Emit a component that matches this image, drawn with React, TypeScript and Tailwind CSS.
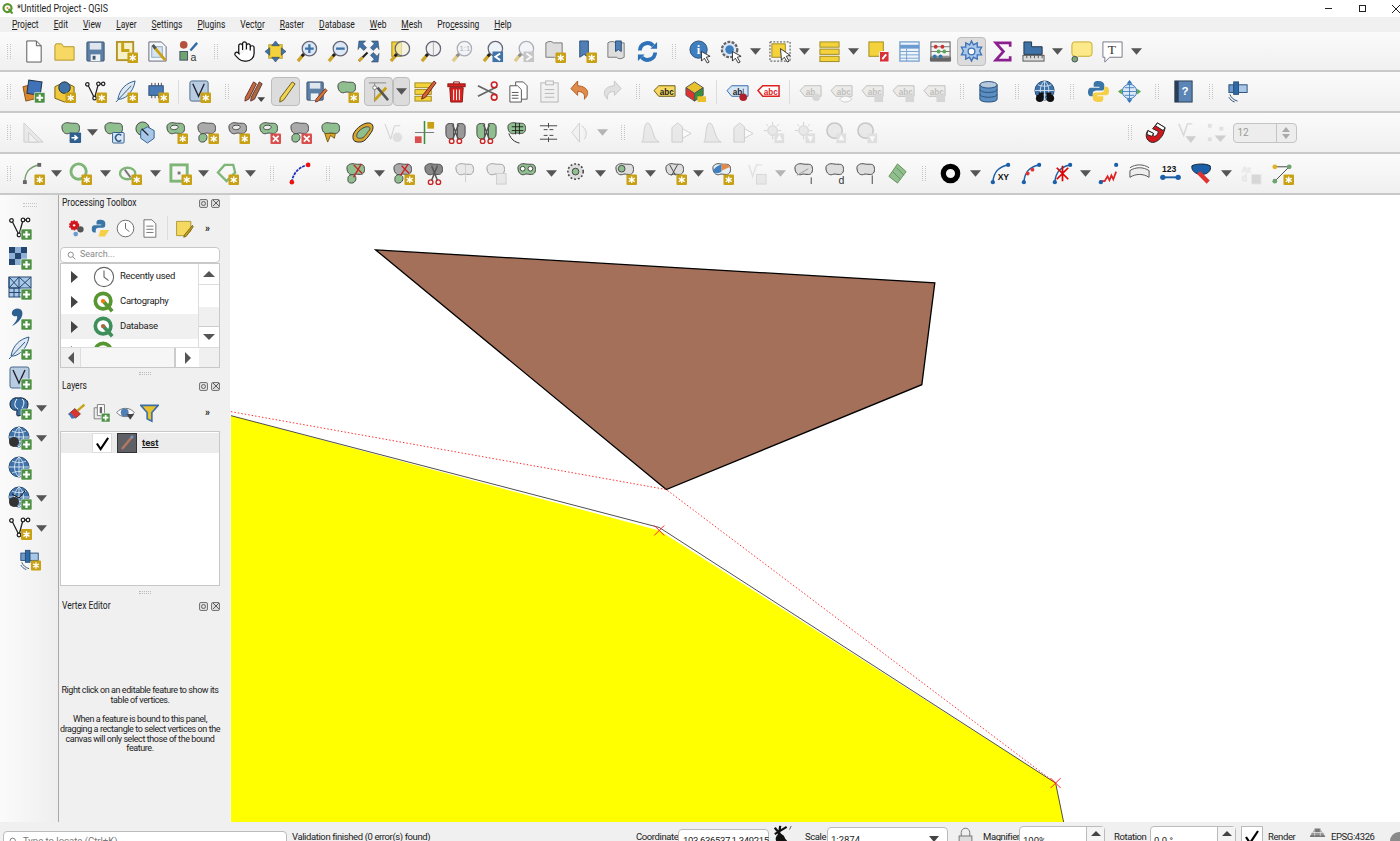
import type { ReactNode } from "react";

const star = (
  <g>
    <rect x="13" y="13" width="11" height="11" rx="1" fill="#c9a114" />
    <path d="M18.5 15v7M15.4 16.8l6.2 3.6M21.6 16.8l-6.2 3.6" stroke="#fff" strokeWidth="1.4" />
  </g>
);
const plus = (
  <g>
    <rect x="13" y="13" width="11" height="11" rx="1" fill="#4d9144" stroke="#fff" strokeWidth=".6" />
    <path d="M18.5 15v7M15 18.5h7" stroke="#fff" strokeWidth="2.2" />
  </g>
);
const redx = (
  <g>
    <rect x="13" y="13" width="11" height="11" rx="1" fill="#d8504d" />
    <path d="M15.5 15.5l6 6M21.5 15.5l-6 6" stroke="#fff" strokeWidth="1.8" />
  </g>
);
const blob = (fill = "#8fbf8f") => <path d="M2 6c0-3 4-5 8-4s9-1 10 3 0 8-4 8-5-1-7 0-7 0-7-7z" fill={fill} stroke="#444" />;
const lowBlob = (fill = "#8fbf8f") => <path d="M3 17c0-3 4-5 7-3s1 8-3 8-4-2-4-5z" fill={fill} stroke="#444" />;
const scissors = (
  <g fill="none" stroke="#c22">
    <circle cx="8" cy="20" r="2.4" strokeWidth="1.4" />
    <circle cx="16" cy="20" r="2.4" strokeWidth="1.4" />
    <path d="M9 18L15 3M15 18L9 3" stroke="#555" strokeWidth="1.6" />
  </g>
);
const mag = (inner?: ReactNode, fill = "#eef3fa") => (
  <g>
    <path d="M3 22l6-7" stroke="#caa52a" strokeWidth="3.4" />
    <path d="M7 17l3-3" stroke="#222" strokeWidth="3" />
    <circle cx="15" cy="9" r="7.5" fill={fill} stroke="#667" strokeWidth="1.3" />
    {inner}
  </g>
);
const vee = (
  <g fill="none" stroke="#222" strokeWidth="1.3">
    <path d="M4 5l7 14 4-15h4" />
    <circle cx="3.5" cy="4.5" r="1.8" fill="#fff" />
    <circle cx="11" cy="19" r="1.8" fill="#fff" />
    <circle cx="15" cy="4" r="1.8" fill="#fff" />
    <circle cx="20" cy="4" r="1.8" fill="#fff" />
  </g>
);
const feather = (
  <g>
    <path d="M21 1C12 3 5 9 3 20c6 1 16-6 18-19z" fill="#dfe8f2" stroke="#2f5f8f" />
    <path d="M1 23L17 6" stroke="#2f5f8f" />
  </g>
);
const vbox = (
  <g>
    <rect x="2" y="1" width="19" height="21" rx="2" fill="#b8cde2" stroke="#4a6a8a" />
    <path d="M5 4l6 13 6-13" fill="none" stroke="#223" strokeWidth="1.4" />
  </g>
);
const globe = (
  <g>
    <circle cx="11" cy="11" r="10" fill="#3f72a8" stroke="#2b4f78" />
    <path d="M1 11h20M11 1v20M4 5c4 2 10 2 14 0M4 17c4-2 10-2 14 0M11 1c-6 5-6 15 0 20M11 1c6 5 6 15 0 20" stroke="#dfeaf5" fill="none" strokeWidth=".9" />
  </g>
);
const chip = (
  <g>
    <rect x="3" y="6" width="15" height="10" fill="#4a7ab5" stroke="#2b4f78" />
    <path d="M6 3v3M9.5 3v3M13 3v3M16 3v3M6 16v3M9.5 16v3M13 16v3M16 16v3" stroke="#445" />
  </g>
);
const tag = (c: string, t: string, s = "#888") => (
  <g>
    <path d="M1 11l5-5h17v11H6z" fill={c} stroke={s} />
    <text x="7" y="15.5" fontSize="8.5" fontWeight="700" fill={s === "#888" ? "#888" : "#222"} fontFamily="Liberation Sans">{t}</text>
  </g>
);
const map = (c = "#ddd") => <path d="M3 3c3-2 6-2 8 0h9v15c-3 2-6 2-8 0H3z" fill={c} stroke="#777" />;
const wms = (
  <g fill="#6c9bd0" stroke="#2b4f78">
    <rect x="2" y="5" width="5" height="8" />
    <rect x="7" y="2" width="5" height="13" fill="#2f6aa8" />
    <rect x="12" y="5" width="9" height="8" fill="#a9c8e8" />
    <path d="M3 15c1 3 4 6 8 7M2 18c1 2 3 4 6 5" fill="none" />
  </g>
);
const sun = (
  <g stroke="#aaa" fill="#ddd">
    <circle cx="10" cy="10" r="5" />
    <path d="M10 1v3M10 16v3M1 10h3M16 10h3M3.5 3.5l2 2M16.5 3.5l-2 2" />
  </g>
);
const ball = <circle cx="10" cy="10" r="8" fill="#ddd" stroke="#999" strokeWidth="1.6" />;
const pencil = <path d="M19 2l3 2-12 17-4 2 .5-4.5z" fill="#f2d34f" stroke="#665a1e" />;
const curve = (c = "#1a5fa8") => <path d="M4 21C5 10 10 5 20 3" fill="none" stroke={c} strokeWidth="1.6" />;
const dotEnds = (c = "#1a5fa8") => (
  <g fill={c}>
    <circle cx="4" cy="21" r="2.2" />
    <circle cx="20" cy="3" r="2.2" />
  </g>
);

const ic: Record<string, ReactNode> = {
  new: <path d="M5 1h10l5 5v17H5zM15 1v5h5" fill="#fff" stroke="#555" />,
  open: <path d="M2 6l1-2h6l2 3h11v14H2z" fill="#f6d862" stroke="#b2962b" />,
  save: (
    <g>
      <rect x="3" y="2" width="18" height="20" rx="1" fill="#5d7fa5" stroke="#3d5670" />
      <rect x="6" y="3" width="12" height="7" fill="#dfe5ec" />
      <rect x="7" y="15" width="10" height="7" fill="#eef1f4" />
      <rect x="9" y="16.5" width="3" height="4" fill="#3d5670" />
    </g>
  ),
  layout: (
    <g>
      <rect x="2" y="2" width="17" height="19" fill="#f7f1c8" stroke="#b2962b" strokeWidth="2" />
      <path d="M8 2v9h7" fill="none" stroke="#c9a114" strokeWidth="3" />
      {star}
    </g>
  ),
  layoutm: (
    <g>
      <path d="M3 2h13l5 5v15H3z" fill="#f4f7fb" stroke="#667" />
      <rect x="6" y="7" width="11" height="11" fill="#d8e4f2" stroke="#8ab" />
      <path d="M9 8l11 13" stroke="#c9a114" strokeWidth="3" />
      <path d="M7 5l3 4" stroke="#555" strokeWidth="3" />
    </g>
  ),
  style: (
    <g>
      <circle cx="7" cy="5" r="4" fill="#b5503d" />
      <rect x="3" y="12" width="8" height="9" fill="#6fa26f" stroke="#456" />
      <path d="M14 11l7-8" stroke="#2f6aa8" strokeWidth="2.4" />
      <text x="14" y="22" fontSize="11" fill="#333" fontFamily="Liberation Sans">a</text>
    </g>
  ),
  hand: (
    <path
      d="M18 11V6a2 2 0 0 0-2-2a2 2 0 0 0-2 2M14 10V4a2 2 0 0 0-2-2a2 2 0 0 0-2 2v2M10 10.5V6a2 2 0 0 0-2-2a2 2 0 0 0-2 2v8M18 8a2 2 0 1 1 4 0v6a8 8 0 0 1-8 8h-2c-2.8 0-4.5-.86-5.99-2.34l-3.6-3.6a2 2 0 0 1 2.83-2.82L7 15"
      fill="#fff"
      stroke="#111"
      strokeWidth="1.3"
    />
  ),
  panmap: (
    <g>
      <rect x="5" y="5" width="14" height="14" fill="#f4d23c" stroke="#b2962b" />
      <path d="M12 1l4 5H8zM12 23l4-5H8zM1 12l5-4v8zM23 12l-5-4v8z" fill="#3f72a8" stroke="#234" strokeWidth=".5" />
    </g>
  ),
  zin: mag(<path d="M15 4.5v9M10.5 9h9" stroke="#3f72a8" strokeWidth="2.4" />, "#dce8f5"),
  zout: mag(<path d="M10.5 9h9" stroke="#3f72a8" strokeWidth="2.4" />, "#dce8f5"),
  zfull: (
    <g>
      <path d="M2 1h7L6 4l4 4-3 3-4-4-2 3zM22 1h-7l3 3-4 4 3 3 4-4 2 3zM22 23h-7l3-3-4-4 3-3 4 4 2-3z" fill="#3f72a8" stroke="#234" strokeWidth=".5" />
      <path d="M2 22l9-9" stroke="#222" strokeWidth="2.2" />
      <path d="M2 22l4-4" stroke="#caa52a" strokeWidth="3" />
    </g>
  ),
  zsel: (
    <g>
      <rect x="4" y="2" width="10" height="15" fill="#f4d23c" stroke="#a08a20" />
      {mag(undefined, "#f4f1d8aa")}
    </g>
  ),
  zlay: mag(<path d="M15 2v14" stroke="#aaa" />, "#f2f2f2"),
  z11: mag(<text x="10" y="12" fontSize="8" fill="#666" fontFamily="Liberation Sans">1:1</text>),
  zlast: (
    <g>
      {mag()}
      <rect x="12" y="12" width="11" height="11" fill="#3f72a8" />
      <path d="M20 14l-5 3.5 5 3.5" fill="none" stroke="#fff" strokeWidth="2" />
    </g>
  ),
  znext: (
    <g>
      {mag()}
      <rect x="12" y="12" width="11" height="11" fill="#999" />
      <path d="M15 14l5 3.5-5 3.5" fill="none" stroke="#fff" strokeWidth="2" />
    </g>
  ),
  newmap: <g>{map()}{star}</g>,
  bookmark: (
    <g>
      <path d="M6 1h9v17l-4.5-3L6 18z" fill="#4f7fb5" stroke="#2b4f78" />
      {star}
    </g>
  ),
  showbm: (
    <g>
      {map()}
      <path d="M11 1h6v11l-3-2-3 2z" fill="#4f7fb5" stroke="#2b4f78" />
    </g>
  ),
  refresh: (
    <g fill="none" stroke="#2f72b8" strokeWidth="4">
      <path d="M4 11a8 8 0 0 1 14-5" />
      <path d="M20 13a8 8 0 0 1-14 5" />
      <path d="M15 9h7V2zM9 15H2v7z" fill="#2f72b8" stroke="none" />
    </g>
  ),
  identify: (
    <g>
      <circle cx="10" cy="10" r="9" fill="#3f7fc0" stroke="#2b4f78" />
      <text x="8" y="15" fontSize="13" fontWeight="700" fill="#fff" fontFamily="Liberation Serif">i</text>
      <path d="M13 12l9 5-4 1 3 5-2 1-3-5-3 3z" fill="#fff" stroke="#333" />
    </g>
  ),
  action: (
    <g>
      <circle cx="10" cy="10" r="8" fill="#dce8f5" stroke="#666" strokeWidth="2.4" strokeDasharray="3 1.4" />
      <circle cx="10" cy="10" r="4.5" fill="#3f7fc0" />
      <path d="M13 12l9 5-4 1 3 5-2 1-3-5-3 3z" fill="#fff" stroke="#333" />
    </g>
  ),
  select: (
    <g>
      <rect x="1" y="2" width="21" height="20" fill="none" stroke="#444" strokeDasharray="2 1.5" />
      <rect x="3" y="4" width="14" height="14" fill="#f4d23c" stroke="#a08a20" />
      <path d="M12 9l10 7-4 1 3 5-2 1-3-5-3 3z" fill="#fff" stroke="#333" />
    </g>
  ),
  bars: (
    <g fill="#f4d23c" stroke="#a08a20">
      <rect x="2" y="2" width="20" height="5.5" />
      <rect x="2" y="9.5" width="20" height="5.5" />
      <rect x="2" y="17" width="20" height="5.5" />
    </g>
  ),
  desel: (
    <g>
      <rect x="2" y="2" width="15" height="15" fill="#f4d23c" stroke="#a08a20" />
      <rect x="13" y="12" width="10" height="11" rx="1" fill="#d8323a" stroke="#fff" />
      <path d="M16 20l4-5" stroke="#fff" strokeWidth="2" />
    </g>
  ),
  table: (
    <g>
      <rect x="2" y="2" width="20" height="20" fill="#eef4fb" stroke="#7aa3cf" strokeWidth="1.4" />
      <path d="M2 7h20" stroke="#6c9bd0" strokeWidth="4" />
      <path d="M9 9v13M2 12h20M2 15.5h20M2 19h20" stroke="#7aa3cf" />
    </g>
  ),
  abacus: (
    <g>
      <rect x="2" y="2" width="20" height="20" fill="#f4f4f4" stroke="#555" />
      <rect x="1" y="18" width="22" height="4" fill="#666" />
      <path d="M2 7h20M2 12h20M2 17h20" stroke="#777" />
      <g fill="#c33"><circle cx="7" cy="7" r="2" /><circle cx="14" cy="7" r="2" /></g>
      <g fill="#5a5"><circle cx="10" cy="12" r="2" /><circle cx="16" cy="12" r="2" /></g>
      <g fill="#37a"><circle cx="6" cy="17" r="2" /><circle cx="12" cy="17" r="2" /></g>
    </g>
  ),
  gear: (
    <g fill="#a9c8ea" stroke="#3f72b8" strokeWidth="1.4">
      <path d="M12 1l2 4 4-2 0 4.5 4.5 0-2 4 2 4-4.5 0 0 4.5-4-2-2 4-2-4-4 2 0-4.5-4.5 0 2-4-2-4 4.5 0 0-4.5 4 2z" />
      <circle cx="12" cy="12" r="3.5" fill="#fff" />
    </g>
  ),
  sigma: <path d="M20 7V3H5l8 9-8 9h15v-4" fill="none" stroke="#8b1f8f" strokeWidth="2.8" />,
  measure: (
    <g>
      <path d="M2 2h8v5h11v8H2z" fill="#3f72a8" stroke="#234" />
      <rect x="1" y="16" width="22" height="6" fill="#ddd" stroke="#555" />
      <path d="M5 16v3M9 16v3M13 16v3M17 16v3M21 16v3" stroke="#555" />
    </g>
  ),
  tip: (
    <g>
      <path d="M5 2h15a3 3 0 0 1 3 3v9a3 3 0 0 1-3 3H9l-4 3v-3a3 3 0 0 1-3-3V5a3 3 0 0 1 3-3z" fill="#fbe98a" stroke="#c8a92a" />
      <circle cx="5" cy="20" r="3" fill="#7fa66f" stroke="#456" />
    </g>
  ),
  text: (
    <g>
      <path d="M2 2h20v16H9l-5 5v-5H2z" fill="#fff" stroke="#778" />
      <text x="7" y="15" fontSize="14" fill="#333" fontFamily="Liberation Serif">T</text>
    </g>
  ),
  layers: (
    <g>
      <path d="M1 7l12-3 3 15-12 3z" fill="#d9882d" stroke="#8a5316" />
      <rect x="6" y="1" width="14" height="14" transform="rotate(8 13 8)" fill="#3f72b8" stroke="#234" />
      {plus}
    </g>
  ),
  gpkg: (
    <g>
      <path d="M2 7l10-5 10 5v12l-10 4-10-4z" fill="#f0c93a" stroke="#765f10" />
      <circle cx="12" cy="8" r="6" fill="#3f72a8" stroke="#234" />
      {star}
    </g>
  ),
  vstar: <g>{vee}{star}</g>,
  fstar: <g>{feather}{star}</g>,
  chipstar: <g>{chip}{star}</g>,
  vbstar: <g>{vbox}{star}</g>,
  pencils: (
    <g>
      <path d="M11 2l3 2-8 16-4 2 .5-4z" fill="#c26a3a" stroke="#633" />
      <path d="M17 2l3 2-8 16-4 2 .5-4z" fill="#a8693f" stroke="#633" />
      <path d="M15 18h8l-4 5z" fill="#444" />
    </g>
  ),
  pencil: pencil,
  saveedit: (
    <g>
      <rect x="2" y="2" width="17" height="19" rx="1" fill="#5d7fa5" stroke="#3d5670" />
      <rect x="5" y="3" width="11" height="6" fill="#dfe5ec" />
      <rect x="6" y="14" width="8" height="7" fill="#eef1f4" />
      <path d="M21 9l2 2-9 11-3 1 .5-3z" fill="#d9782d" stroke="#733" />
    </g>
  ),
  blobstar: <g>{blob()}{star}</g>,
  tools: (
    <g>
      <path d="M2 3h18M8 3v20" stroke="#888" />
      <circle cx="8" cy="8" r="2" fill="#fff" stroke="#777" />
      <path d="M8 21L20 8" stroke="#c9a114" strokeWidth="3" />
      <path d="M11 8l11 13" stroke="#555" strokeWidth="2.6" />
    </g>
  ),
  editattr: (
    <g>
      <g fill="#f4d23c" stroke="#a08a20">
        <rect x="1" y="3" width="17" height="5" />
        <rect x="1" y="10" width="17" height="5" />
        <rect x="1" y="17" width="17" height="5" />
      </g>
      <path d="M21 1l2 2-11 15-4 2 1-4z" fill="#d9622d" stroke="#622" />
    </g>
  ),
  trash: (
    <g fill="#d9231f" stroke="#8d1310">
      <rect x="3" y="4" width="18" height="3" />
      <path d="M9 4V2h6v2" fill="none" />
      <path d="M5 8h14l-1 15H6z" />
      <path d="M9 10v11M12 10v11M15 10v11" stroke="#fff" />
    </g>
  ),
  scissors: (
    <g fill="none">
      <path d="M2 6l20 10M2 17L22 7" stroke="#666" strokeWidth="1.8" />
      <circle cx="19" cy="5" r="3" stroke="#c22" strokeWidth="1.6" />
      <circle cx="19" cy="18" r="3" stroke="#c22" strokeWidth="1.6" />
    </g>
  ),
  copy: (
    <g fill="#fff" stroke="#555">
      <path d="M9 2h8l4 4v14H9z" />
      <path d="M3 6h8l4 4v13H3z" />
      <path d="M5 13h7M5 16h7M5 19h7" />
    </g>
  ),
  paste: (
    <g fill="#eee" stroke="#777">
      <rect x="3" y="3" width="18" height="20" />
      <rect x="8" y="1" width="8" height="4" />
      <path d="M7 10h10M7 14h10M7 18h10" />
    </g>
  ),
  undo: <path d="M9 1L2 9l7 7v-4c5 0 8 2 7 8 5-4 6-13-7-14z" fill="#e08a4c" stroke="#b05a1e" />,
  redo: <path d="M15 1l7 8-7 7v-4c-5 0-8 2-7 8-5-4-6-13 7-14z" fill="#ccc" stroke="#999" />,
  abcy: tag("#f6d862", "abc", "#6b5a10"),
  pie: (
    <g>
      <path d="M2 8l9-6 9 6-9 6z" fill="#e8c12c" stroke="#555" />
      <path d="M2 8v8l9 6v-8z" fill="#d33" stroke="#555" />
      <path d="M20 8v8l-9 6v-8z" fill="#3a8f3a" stroke="#555" />
      <rect x="14" y="17" width="9" height="6" fill="#e8c12c" />
    </g>
  ),
  abpin: (
    <g>
      {tag("#d7e6f7", "ab", "#2f6aa8")}
      <circle cx="18" cy="18" r="4" fill="#b0202c" />
      <path d="M18 9v6" stroke="#555" />
    </g>
  ),
  abcr: (
    <g>
      <path d="M1 11l5-5h17v11H6z" fill="#fff" stroke="#d22" strokeWidth="1.6" />
      <text x="7" y="15.5" fontSize="8.5" fontWeight="700" fill="#d22" fontFamily="Liberation Sans">abc</text>
    </g>
  ),
  t1: <g>{tag("#e4e2da", "ab")}<circle cx="18" cy="18" r="4" fill="#bbb" /></g>,
  t2: <g>{tag("#e4e2da", "abc")}<path d="M10 20c3-4 9-4 13 0-4 4-10 4-13 0z" fill="#fff" stroke="#aaa" /></g>,
  t3: <g>{tag("#e4e2da", "abc")}<rect x="14" y="15" width="9" height="8" fill="#bbb" /></g>,
  db: (
    <g fill="#5b8fc4" stroke="#2b4f78">
      <path d="M3 5v15c0 4 18 4 18 0V5z" />
      <ellipse cx="12" cy="5" rx="9" ry="3.4" fill="#b7c9dc" />
      <path d="M3 10c0 4 18 4 18 0M3 15c0 4 18 4 18 0" fill="none" />
    </g>
  ),
  binoc: (
    <g>
      {globe}
      <g fill="#111">
        <circle cx="6" cy="19" r="4" />
        <circle cx="17" cy="19" r="4" />
        <path d="M5 13h5v5H5zM13 13h5v5h-5z" />
      </g>
    </g>
  ),
  python: (
    <g>
      <path d="M12 1c-5 0-5 2-5 4v2h6v1H4c-2 0-3 2-3 4.500s1 4.500 3 4.500h2v-3c0-2 2-3 4-3h5c2 0 3-1 3-3V5c0-2-2-4-6-4z" fill="#3a75a8" />
      <path d="M12 23c5 0 5-2 5-4v-2h-6v-1h9c2 0 3-2 3-4.500S22 7 20 7h-2v3c0 2-2 3-4 3H9c-2 0-3 1-3 3v3c0 2 2 4 6 4z" fill="#f5cf47" />
    </g>
  ),
  globearrows: (
    <g>
      <circle cx="12" cy="12" r="7.500" fill="#dce8f5" stroke="#2f72b8" />
      <path d="M4.500 12h15M12 4.500v15M7 8h10M7 16h10" stroke="#2f72b8" strokeWidth=".8" />
      <path d="M12 0l3 4H9zM12 24l3-4H9z" fill="#2f72b8" />
      <path d="M0 12l4-3v6zM24 12l-4-3v6z" fill="#5aa84a" />
    </g>
  ),
  help: (
    <g>
      <rect x="3" y="1" width="18" height="22" fill="#5b85b5" stroke="#2a3f55" />
      <rect x="3" y="1" width="4" height="22" fill="#2a3f55" />
      <text x="10" y="16" fontSize="12" fontWeight="700" fill="#fff" fontFamily="Liberation Sans">?</text>
    </g>
  ),
  wms: wms,
  wmsstar: <g>{wms}{star}</g>,
  ruler: (
    <g fill="#ddd" stroke="#aaa">
      <path d="M2 2v20h20z" />
      <path d="M7 12v10h10z" fill="#f0f0f0" />
    </g>
  ),
  b_move: (
    <g>
      {blob()}
      <rect x="10" y="12" width="12" height="11" rx="1" fill="#2f5f8f" />
      <path d="M12 17.500h5M15 15l3 2.500-3 2.500" fill="none" stroke="#fff" strokeWidth="1.6" />
    </g>
  ),
  b_rot: (
    <g>
      {blob()}
      <rect x="10" y="12" width="12" height="11" rx="1" fill="#dbe6f2" stroke="#2f5f8f" />
      <path d="M19 20a3.500 3.500 0 1 1 0-5" fill="none" stroke="#2f5f8f" strokeWidth="1.6" />
    </g>
  ),
  b_hex: (
    <g>
      <circle cx="9" cy="8" r="7" fill="#8fbf8f" stroke="#444" />
      <path d="M14 6l7 4v8l-7 5-7-5v-8z" fill="#a9c8e8" stroke="#2f5f8f" />
      <path d="M8 8l7 7" stroke="#223" strokeWidth="1.4" />
    </g>
  ),
  ring: (
    <g>
      {blob()}
      <path d="M6 6c1-2 5-2 7-1s0 4-3 4-5-1-4-3z" fill="#eee" stroke="#444" />
      {star}
    </g>
  ),
  part: <g>{blob("#aaa")}{lowBlob()}{star}</g>,
  ringd: (
    <g>
      {blob("#aaa")}
      <path d="M6 6c1-2 5-2 7-1s0 4-3 4-5-1-4-3z" fill="#eee" stroke="#444" />
      {star}
    </g>
  ),
  ringx: (
    <g>
      {blob()}
      <path d="M6 6c1-2 5-2 7-1s0 4-3 4-5-1-4-3z" fill="#eee" stroke="#444" />
      {redx}
    </g>
  ),
  partx: <g>{blob("#aaa")}{lowBlob()}{redx}</g>,
  reshape: (
    <g>
      {blob()}
      <path d="M5 13l3 9 3-7 4 3 1-5z" fill="#d9a52d" stroke="#76590f" />
    </g>
  ),
  offset2: (
    <g>
      <path d="M2 16c0-6 10-14 16-14s6 6 3 10-6 10-12 10-7-2-7-6z" fill="#d9a52d" stroke="#222" />
      <path d="M6 15c0-4 7-9 11-9s3 3 1 5-4 7-8 7-4-1-4-3z" fill="#8fbf8f" stroke="#444" />
    </g>
  ),
  vsimp: (
    <g>
      <path d="M3 3l6 16 4-14h6" fill="none" stroke="#aaa" />
      <circle cx="16" cy="17" r="5" fill="#ccc" />
    </g>
  ),
  trim: (
    <g>
      <path d="M12 0v24" stroke="#3a8f3a" strokeWidth="1.6" />
      <path d="M2 12h20" stroke="#777" />
      <rect x="15" y="1" width="7" height="7" fill="#c9a114" />
      <rect x="2" y="16" width="7" height="7" fill="#d8504d" />
    </g>
  ),
  split: (
    <g>
      <path d="M2 6c0-3 3-4 8-3v15c-4 2-8 0-8-5z" fill="#999" stroke="#444" />
      <path d="M22 6c0-3-3-4-8-3v15c4 2 8 0 8-5z" fill="#999" stroke="#444" />
      <g transform="translate(0 1)">{scissors}</g>
    </g>
  ),
  splitg: (
    <g>
      <path d="M2 6c0-3 3-4 8-3v15c-4 2-8 0-8-5z" fill="#8fbf8f" stroke="#444" />
      <path d="M22 6c0-3-3-4-8-3v15c4 2 8 0 8-5z" fill="#8fbf8f" stroke="#444" />
      <g transform="translate(0 1)">{scissors}</g>
    </g>
  ),
  merge: (
    <g>
      {blob()}
      <path d="M10 2v12M14 2v12M6 6h12M6 10h12" stroke="#222" />
      <path d="M3 13c2 6 6 9 11 10" fill="none" stroke="#222" />
    </g>
  ),
  dim: <path d="M3 5h18M3 19h18M7 9h4M13 9h4M7 15h4M13 15h4M12 2v5M12 17v5" stroke="#444" fill="none" />,
  rotate: <path d="M12 2l-8 10 8 10zM14 5c5 2 7 9 3 14" fill="#eee" stroke="#aaa" />,
  mnt1: <path d="M3 22h18C14 20 14 2 9 2S6 20 3 22z" fill="#ddd" stroke="#aaa" />,
  mnt2: (
    <g fill="#ddd" stroke="#aaa">
      <path d="M2 22h11V6L8 2 2 7z" />
      <path d="M13 8l9 5-9 5z" fill="#fff" />
    </g>
  ),
  sunu: <g>{sun}<rect x="12" y="13" width="10" height="10" fill="#ccc" /><path d="M17 14l3 6h-6z" fill="#fff" /></g>,
  sund: <g>{sun}<rect x="12" y="13" width="10" height="10" fill="#ccc" /><path d="M17 22l3-6h-6z" fill="#fff" /></g>,
  ballu: <g>{ball}<rect x="12" y="13" width="10" height="10" fill="#ccc" /><path d="M17 14l3 6h-6z" fill="#fff" /></g>,
  balld: <g>{ball}<rect x="12" y="13" width="10" height="10" fill="#ccc" /><path d="M17 22l3-6h-6z" fill="#fff" /></g>,
  magnet: (
    <g>
      <path d="M14 2l8 5-1 4c-2 7-9 13-14 11-5-2-6-8-3-12l6 3c-1 2 0 3 1 3 2 0 4-3 4-5l-6-3z" fill="#d3151c" stroke="#222" />
      <path d="M14 2l8 5-2 3-8-5zM4 10l6 3-2 3-5-2z" fill="#fff" stroke="#222" />
    </g>
  ),
  snap: (
    <g>
      <path d="M4 3l5 12 4-12h5" fill="none" stroke="#bbb" strokeWidth="1.5" />
      <path d="M11 16h11l-5.500 7z" fill="#aaa" />
    </g>
  ),
  dots: (
    <g fill="#ccc">
      <rect x="2" y="3" width="4" height="4" />
      <rect x="14" y="6" width="4" height="4" />
      <rect x="2" y="17" width="4" height="4" />
      <path d="M9 15h12l-6 7z" fill="#aaa" />
    </g>
  ),
  c_curve: (
    <g>
      <path d="M3 21C3 10 8 5 18 3" fill="none" stroke="#7aa36f" strokeWidth="1.6" />
      <rect x="1" y="19" width="4" height="4" fill="#666" />
      <rect x="16" y="1" width="4" height="4" fill="#666" />
      {star}
    </g>
  ),
  c_circle: (
    <g>
      <circle cx="10" cy="10" r="8" fill="none" stroke="#7fb577" strokeWidth="3" />
      {star}
    </g>
  ),
  c_ell: (
    <g>
      <ellipse cx="9" cy="12" rx="8" ry="6" fill="none" stroke="#7fb577" strokeWidth="2.4" />
      <path d="M6 8l6 8" stroke="#777" strokeWidth="2" />
      {star}
    </g>
  ),
  c_rect: (
    <g>
      <rect x="2" y="3" width="17" height="17" fill="none" stroke="#7fb577" strokeWidth="3" />
      <rect x="9" y="10" width="3" height="3" fill="#777" />
      {star}
    </g>
  ),
  c_poly: (
    <g>
      <path d="M2 11l7-8h9l2 8-9 9z" fill="none" stroke="#7fb577" strokeWidth="2.4" />
      {star}
    </g>
  ),
  bezier: (
    <g>
      <path d="M3 21C4 12 10 5 20 3" fill="none" stroke="#1f2fb8" strokeWidth="1.8" strokeDasharray="3 1" />
      <circle cx="3" cy="21" r="2.400" fill="#e11" />
      <circle cx="20" cy="3" r="2.400" fill="#e11" />
    </g>
  ),
  a_cut: <g>{blob()}{lowBlob()}<path d="M9 3l9 9M17 2L9 16" stroke="#c22" strokeWidth="1.4" /></g>,
  a_cutg: <g>{blob("#aaa")}{lowBlob()}<path d="M10 4l8 8M17 2L9 14" stroke="#c22" strokeWidth="1.4" />{star}</g>,
  a_cut3: <g>{blob("#888")}<g transform="translate(0 1)">{scissors}</g></g>,
  a_off1: <g>{blob("#ddd")}<path d="M12 3v18" stroke="#aaa" /></g>,
  a_off2: <g>{blob("#ddd")}<rect x="12" y="12" width="10" height="11" fill="#ddd" stroke="#aaa" /></g>,
  a_gear: (
    <g>
      {blob()}
      <circle cx="7" cy="7" r="2.500" fill="#fff" stroke="#444" />
      <circle cx="15" cy="7" r="2.500" fill="#fff" stroke="#444" />
    </g>
  ),
  a_ring: (
    <g>
      <circle cx="11" cy="10" r="8" fill="#ddd" stroke="#444" strokeDasharray="2 2" strokeWidth="1.6" />
      <circle cx="11" cy="10" r="3.500" fill="#8fbf8f" stroke="#444" />
    </g>
  ),
  a_ring2: <g>{blob("#ddd")}<circle cx="8" cy="7" r="3.500" fill="#8fbf8f" stroke="#444" />{star}</g>,
  a_ring3: (
    <g>
      {blob("#ddd")}
      <path d="M6 3l6 11M14 3L8 14" stroke="#444" />
      {star}
    </g>
  ),
  a_rb: (
    <g>
      <path d="M2 6c0-3 4-5 8-4s9-1 10 3 0 8-4 8-5-1-7 0-7 0-7-7z" fill="#e8eef5" stroke="#444" />
      <path d="M2 9c3-5 6-5 9-7v8c-3 2-6 3-9-1z" fill="#3f7fc0" />
      <path d="M11 2c4 0 7 0 9 3l-9 4z" fill="#e08a4c" />
      {star}
    </g>
  ),
  a_snap: (
    <g>
      <path d="M4 3l4 12 4-12h6" fill="none" stroke="#ccc" strokeWidth="1.400" />
      <rect x="12" y="13" width="10" height="10" fill="#ddd" stroke="#bbb" />
    </g>
  ),
  o1: <g>{blob("#ddd")}<path d="M4 14l12-7" stroke="#999" /><path d="M19 16v7" stroke="#444" /></g>,
  o2: (
    <g>
      {blob("#ddd")}
      <text x="15" y="23" fontSize="11" fill="#333" fontFamily="Liberation Sans">d</text>
    </g>
  ),
  o3: <g>{blob("#ddd")}<path d="M18 14v9" stroke="#444" /></g>,
  o4: <path d="M3 15l9-13 9 8-9 12zM7 10l8 8M11 6l8 8" fill="#8fbf8f" stroke="#6a8f5a" />,
  donut: <circle cx="12" cy="12" r="7.500" fill="none" stroke="#000" strokeWidth="5.500" />,
  xy: (
    <g>
      {curve()}
      {dotEnds()}
      <text x="9" y="19" fontSize="9" fontWeight="700" fill="#111" fontFamily="Liberation Sans">XY</text>
    </g>
  ),
  seg: (
    <g>
      {curve()}
      {dotEnds()}
      <g fill="#d33">
        <circle cx="8" cy="12" r="2" />
        <circle cx="13" cy="8" r="2" />
      </g>
    </g>
  ),
  cross: (
    <g>
      {curve()}
      {dotEnds()}
      <path d="M6 6l12 12M18 6L6 18M12 4v16" stroke="#d00" strokeWidth="1.800" />
    </g>
  ),
  spring: (
    <g>
      <path d="M3 20h5l3-5 2 4 2-5 2 4 3-8" fill="none" stroke="#d22" strokeWidth="1.800" />
      {dotEnds()}
    </g>
  ),
  arc: (
    <g>
      <path d="M2 9c6-4 14-4 20 0v7c-6-4-14-4-20 0z" fill="#eee" stroke="#555" />
      <path d="M2 6c6-4 14-4 20 0" fill="none" stroke="#555" />
    </g>
  ),
  n123: (
    <g>
      <text x="3" y="10" fontSize="9" fontWeight="700" fill="#111" fontFamily="Liberation Sans">123</text>
      <path d="M3 16h18" stroke="#1a5fa8" strokeWidth="2" />
      <circle cx="4" cy="16" r="2.800" fill="#1a5fa8" />
      <circle cx="20" cy="16" r="2.800" fill="#1a5fa8" />
    </g>
  ),
  cutpaint: (
    <g>
      <path d="M2 4c3-2 14-3 19 0 2 5-3 9-9 9S1 9 2 4z" fill="#1a5fa8" stroke="#123" />
      <path d="M9 11l10 10" stroke="#d33" strokeWidth="4.500" />
    </g>
  ),
  azd: (
    <g fill="#bbb" stroke="#ddd">
      <text x="2" y="10" fontSize="8" fontFamily="Liberation Sans">Az</text>
      <text x="2" y="20" fontSize="9" fontFamily="Liberation Sans">d</text>
      <rect x="12" y="13" width="10" height="10" />
    </g>
  ),
  vedit: (
    <g>
      <path d="M4 20L19 5M4 5h15" fill="none" stroke="#444" />
      <circle cx="4" cy="5" r="2.500" fill="#e3b224" />
      <circle cx="19" cy="5" r="2.500" fill="#6fa26f" />
      <circle cx="4" cy="20" r="2.500" fill="#6fa26f" />
      {star}
    </g>
  ),
  l_v: <g>{vee}{plus}</g>,
  l_raster: (
    <g>
      <g fill="#24466e">
        <rect x="1" y="1" width="6" height="6" />
        <rect x="13" y="1" width="6" height="6" />
        <rect x="7" y="7" width="6" height="6" />
        <rect x="1" y="13" width="6" height="6" />
      </g>
      <g fill="#8fb0d4">
        <rect x="7" y="1" width="6" height="6" />
        <rect x="1" y="7" width="6" height="6" />
        <rect x="13" y="7" width="6" height="6" />
        <rect x="7" y="13" width="6" height="6" />
      </g>
      {plus}
    </g>
  ),
  l_mesh: (
    <g>
      <rect x="1" y="1" width="22" height="20" fill="#a9c8e8" stroke="#24466e" />
      <path d="M1 1l10 11L1 12zM11 1L1 12M11 1v20M11 1l12 11M23 1L11 12M1 12h22M1 16.500h22M6 12v9" fill="none" stroke="#24466e" />
      {plus}
    </g>
  ),
  l_comma: (
    <g>
      <path d="M4 6c1-4 8-5 10-1 2 5-3 12-10 15 3-3 6-7 5-10-3 1-6-1-5-4z" fill="#2f5f8f" />
      {plus}
    </g>
  ),
  l_feather: <g>{feather}{plus}</g>,
  l_vbox: <g>{vbox}{plus}</g>,
  l_pg: (
    <g>
      <path d="M2 8c0-4 4-7 8-6 4-1 10 1 10 6s-3 8-5 6l-1 5-4 1c-2 0-1-4-1-6-3 1-7-1-7-6z" fill="#3a6ea5" stroke="#123" />
      <path d="M9 3c-3 4-3 8 1 10M14 3c3 2 2 6 0 9" fill="none" stroke="#fff" />
      {plus}
    </g>
  ),
  l_wms: <g>{globe}<circle cx="6" cy="16" r="5" fill="#333" />{plus}</g>,
  l_globe: <g>{globe}{plus}</g>,
  l_wfs: (
    <g>
      {globe}
      <path d="M4 8l7 4 6-7" fill="none" stroke="#111" />
      <circle cx="6" cy="16" r="5" fill="#333" />
      {plus}
    </g>
  ),
  p_gears: (
    <g>
      <circle cx="9" cy="8" r="5.500" fill="#d3151c" stroke="#d3151c" strokeWidth="2" strokeDasharray="2 1.500" />
      <circle cx="9" cy="8" r="1.500" fill="#fff" />
      <circle cx="17" cy="13" r="4" fill="#555" />
      <circle cx="11" cy="19" r="3" fill="#6c9bd0" />
    </g>
  ),
  p_py: (
    <g>
      <path d="M12 1C7 1 7 3 7 5v2h6v1H4c-2 0-3 2-3 4.500s1 4.500 3 4.500h2v-3c0-2 2-3 4-3h5c2 0 3-1 3-3V5c0-2-2-4-6-4z" fill="#3a75a8" />
      <path d="M12 14h11l-5.500 8-8 0z" fill="#f5cf47" />
    </g>
  ),
  clock: (
    <g fill="none" stroke="#666" strokeWidth="1.200">
      <circle cx="12" cy="12" r="10.500" fill="#fff" />
      <path d="M12 5v7l5 4" />
    </g>
  ),
  doc: <path d="M5 1h10l5 5v17H5zM8 9h9M8 13h9M8 17h9" fill="#fff" stroke="#555" />,
  p_edit: (
    <g>
      <path d="M2 3h18v12l-6 6H2z" fill="#f4d860" stroke="#a08a20" />
      <path d="M22 8l1 2-9 12-3 1 1-3z" fill="#c9a114" stroke="#665a1e" />
    </g>
  ),
  brush: (
    <g>
      <path d="M2 14l8-7 7 7-6 5z" fill="#d33" stroke="#633" />
      <path d="M2 14l4 6 5-1-7-7z" fill="#3f72b8" />
      <path d="M13 10l9-8" stroke="#c9a114" strokeWidth="3" />
    </g>
  ),
  grp: (
    <g>
      <path d="M4 6h9v14H4z" fill="#eee" stroke="#666" />
      <path d="M8 2h9v14H8z" fill="#fff" stroke="#666" />
      <rect x="11" y="5" width="3" height="8" fill="#666" />
      {plus}
    </g>
  ),
  eye: (
    <g>
      <path d="M1 12c5-7 17-7 22 0-5 7-17 7-22 0z" fill="#fff" stroke="#555" />
      <circle cx="11" cy="12" r="5" fill="#4f7fb5" />
      <path d="M13 14h10l-5 7z" fill="#444" />
    </g>
  ),
  funnel: <path d="M1 3h22l-8 9v11l-6-3v-8z" fill="#e8c12c" stroke="#3a6ea5" strokeWidth="2" />,
  lock: (
    <g fill="none" stroke="#777" strokeWidth="1.400">
      <path d="M6 12V7a6 6 0 0 1 12 0v5" />
      <rect x="3" y="12" width="18" height="10" fill="#ddd" />
    </g>
  ),
  toggle: (
    <g>
      <path d="M3 3l15 18M9 1l-3 18M3 10l13-8" stroke="#111" strokeWidth="2.400" fill="none" />
      <circle cx="9" cy="15" r="5" fill="#111" />
      <path d="M21 1l-2 4" stroke="#555" />
    </g>
  ),
  crs: (
    <g fill="#777">
      <path d="M8 2h8l2 5H6z" />
      <path d="M4 8h16l3 6H1z" />
      <path d="M8 3v10M16 3v10M2 10h20" stroke="#eee" strokeWidth=".8" />
    </g>
  ),
};

const Svg = ({ n, c = "w-[23px] h-[25px]" }: { n: string; c?: string }) => (
  <svg viewBox="0 0 24 24" className={c}>
    {ic[n]}
  </svg>
);

// one toolbar button, 31px wide
function I({ n, off, on }: { n: string; off?: boolean; on?: boolean }) {
  return (
    <div className="w-[31px] h-[30px] shrink-0 flex items-center justify-center">
      <div className={`w-[29px] h-[29px] flex items-center justify-center rounded-sm border ${on ? "bg-[#dcdcdc] border-[#bdbdbd]" : "border-transparent"} ${off ? "opacity-50" : ""}`}>
        <Svg n={n} />
      </div>
    </div>
  );
}

function Drop({ c = "w-[18px]", off }: { c?: string; off?: boolean }) {
  return (
    <div className={`${c} shrink-0 flex justify-center ${off ? "opacity-40" : ""}`}>
      <svg viewBox="0 0 12 7" className="w-[11px] h-[7px]">
        <path d="M0 0h12L6 7z" fill="#555" />
      </svg>
    </div>
  );
}

function Grip({ c }: { c: string }) {
  return (
    <div className={`${c} shrink-0 flex justify-center`}>
      <div className="w-[4px] h-[15px] border-x border-dotted border-[#c4c4c4]" />
    </div>
  );
}

function Sep({ c }: { c: string }) {
  return (
    <div className={`${c} shrink-0 flex justify-center`}>
      <div className="w-px h-[24px] bg-[#dcdcdc]" />
    </div>
  );
}

const Row = ({ h, children }: { h: string; children: ReactNode }) => (
  <div className={`${h} flex items-center bg-gradient-to-b from-[#fbfbfb] to-[#f0f0f0] border-b-2 border-[#c9c9c9] overflow-hidden`}>{children}</div>
);

const many = (names: string, off?: boolean) => names.split(" ").map((n, i) => <I key={n + i} n={n} off={off} />);

function Toolbars() {
  return (
    <>
      <Row h="h-[40px]">
        <Grip c="w-[17.5px]" />
        {many("new open save layout layoutm style")}
        <Grip c="w-[25px]" />
        {many("hand panmap zin zout zfull zsel zlay")}
        <I n="z11" off />
        <I n="zlast" />
        <I n="znext" off />
        {many("newmap bookmark showbm refresh")}
        <Grip c="w-[22px]" />
        {many("identify action")}
        <Drop />
        <I n="select" />
        <Drop />
        <I n="bars" />
        <Drop />
        {many("desel table abacus")}
        <I n="gear" on />
        {many("sigma measure")}
        <Drop c="w-[17px]" />
        {many("tip text")}
        <Drop c="w-[17px]" />
      </Row>
      <Row h="h-[41px]">
        <Grip c="w-[17.5px]" />
        {many("layers gpkg vstar fstar chipstar")}
        <Sep c="w-[11px]" />
        <I n="vbstar" />
        <Grip c="w-[24px]" />
        <I n="pencils" />
        <I n="pencil" on />
        {many("saveedit blobstar")}
        <I n="tools" on />
        <div className="w-[17px] h-[29px] -ml-px shrink-0 bg-[#dcdcdc] border border-[#bdbdbd] rounded-sm flex items-center">
          <Drop c="w-[15px]" />
        </div>
        {many("editattr trash scissors copy")}
        <I n="paste" off />
        <I n="undo" />
        <I n="redo" off />
        <Grip c="w-[22px]" />
        {many("abcy pie")}
        <Sep c="w-[11.5px]" />
        {many("abpin abcr")}
        <Sep c="w-[11px]" />
        {many("t1 t2 t3 t3 t3", true)}
        <Grip c="w-[23px]" />
        <I n="db" />
        <Grip c="w-[26px]" />
        <I n="binoc" />
        <Grip c="w-[22px]" />
        {many("python globearrows")}
        <Grip c="w-[23px]" />
        <I n="help" />
        <Grip c="w-[24px]" />
        <I n="wms" />
      </Row>
      <Row h="h-[41px]">
        <Grip c="w-[17.5px]" />
        <I n="ruler" off />
        <div className="w-[7px] shrink-0" />
        <I n="b_move" />
        <Drop c="w-[12px]" />
        {many("b_rot b_hex ring part ringd ringx partx reshape offset2")}
        <I n="vsimp" off />
        {many("trim split splitg merge dim")}
        <I n="rotate" off />
        <Drop c="w-[16px]" off />
        <Grip c="w-[24px]" />
        {many("mnt1 mnt2 mnt1 mnt2 sunu sund ballu balld", true)}
        <div className="w-[237px] shrink-0" />
        <Grip c="w-[20px]" />
        <I n="magnet" />
        <I n="snap" off />
        <I n="dots" off />
        <div className="w-[64px] h-[20px] shrink-0 flex bg-[#ededed] border border-[#c4c4c4] rounded-sm text-[10px] text-[#999] leading-[18px]">
          <span className="flex-1 pl-[4px]">12</span>
          <div className="w-[20px] border-l border-[#c4c4c4] flex flex-col items-center justify-center gap-[2px]">
            <div className="w-0 h-0 border-x-[4px] border-x-transparent border-b-[5px] border-b-[#aaa]" />
            <div className="w-0 h-0 border-x-[4px] border-x-transparent border-t-[5px] border-t-[#aaa]" />
          </div>
        </div>
      </Row>
      <Row h="h-[41px]">
        <Grip c="w-[17.5px]" />
        <I n="c_curve" />
        <Drop c="w-[16px]" />
        <I n="c_circle" />
        <Drop c="w-[19px]" />
        <I n="c_ell" />
        <Drop c="w-[19px]" />
        <I n="c_rect" />
        <Drop c="w-[16px]" />
        <I n="c_poly" />
        <Drop c="w-[16px]" />
        <Grip c="w-[26px]" />
        <I n="bezier" />
        <Grip c="w-[25px]" />
        <I n="a_cut" />
        <Drop c="w-[16px]" />
        {many("a_cutg a_cut3")}
        {many("a_off1 a_off2", true)}
        <I n="a_gear" />
        <Drop />
        <I n="a_ring" />
        <Drop />
        <I n="a_ring2" />
        <Drop c="w-[19px]" />
        <I n="a_ring3" />
        <Drop c="w-[16px]" />
        <I n="a_rb" />
        <div className="w-[3px] shrink-0" />
        <I n="a_snap" off />
        <Drop c="w-[17px]" off />
        {many("o1 o2 o3 o4")}
        <Grip c="w-[22px]" />
        <I n="donut" />
        <Drop c="w-[19px]" />
        {many("xy seg cross")}
        <Drop c="w-[15px]" />
        {many("spring arc n123 cutpaint")}
        <Drop c="w-[19px]" />
        <I n="azd" off />
        <I n="vedit" />
      </Row>
    </>
  );
}

const MENUS: [string, string, string][] = [
  ["", "P", "roject"],
  ["", "E", "dit"],
  ["", "V", "iew"],
  ["", "L", "ayer"],
  ["", "S", "ettings"],
  ["", "P", "lugins"],
  ["Vect", "o", "r"],
  ["", "R", "aster"],
  ["", "D", "atabase"],
  ["", "W", "eb"],
  ["", "M", "esh"],
  ["Pro", "c", "essing"],
  ["", "H", "elp"],
];

function TitleBar() {
  return (
    <div className="h-[17px] bg-white flex items-center pl-[2px] overflow-hidden">
      <svg viewBox="0 0 24 24" className="w-[12px] h-[13px]">
        <circle cx="11" cy="11" r="8" fill="none" stroke="#589632" strokeWidth="4.500" />
        <path d="M13 13l8 9" stroke="#589632" strokeWidth="4" />
        <circle cx="11" cy="11" r="2" fill="#ee7913" />
      </svg>
      <span className="ml-[3px] w-[91px] whitespace-nowrap origin-left scale-x-[.77] text-[11.5px] text-[#222]">*Untitled Project - QGIS</span>
      <div className="flex-1" />
      <div className="w-[7px] h-px bg-[#222] mr-[27px]" />
      <div className="w-[7px] h-[7px] border border-[#222] mr-[26px]" />
      <svg viewBox="0 0 8 8" className="w-[8px] h-[8px]">
        <path d="M0 0l8 8M8 0L0 8" stroke="#222" />
      </svg>
    </div>
  );
}

function MenuBar() {
  return (
    <div className="h-[15px] bg-[#f0f0f0] pl-[12px] overflow-hidden">
      <div className="h-full flex items-center gap-[20.4px] origin-left scale-x-[.735] text-[11.5px] text-[#222]">
        {MENUS.map(([a, u, b], i) => (
          <span key={i}>
            {a}
            <u>{u}</u>
            {b}
          </span>
        ))}
      </div>
    </div>
  );
}

function PanelTitle({ t }: { t: string }) {
  return (
    <div className="h-[17px] flex items-center pl-[2px] pr-[10px] pb-px text-[11.5px] text-[#222]">
      <span className="flex-1 whitespace-nowrap origin-left scale-x-[.74]">{t}</span>
      <div className="w-[9px] h-[9px] rounded-[2px] border border-[#777] bg-[#ddd] mr-[3px] flex items-center justify-center">
        <div className="w-[5px] h-[5px] rounded-full border border-[#666]" />
      </div>
      <div className="w-[9px] h-[9px] rounded-[2px] border border-[#777] bg-[#ddd] flex items-center justify-center">
        <svg viewBox="0 0 8 8" className="w-[6px] h-[6px]">
          <path d="M0 0l8 8M8 0L0 8" stroke="#333" />
        </svg>
      </div>
    </div>
  );
}

const Mini = ({ n }: { n: string }) => (
  <div className="w-[24.5px] shrink-0 flex justify-center">
    <Svg n={n} c="w-[19px] h-[21px]" />
  </div>
);
const More = () => <span className="ml-auto mr-[20px] text-[10px] font-bold text-[#222]">»</span>;
const Tri = () => <div className="w-0 h-0 border-y-[6px] border-y-transparent border-l-[7px] border-l-[#444]" />;

function QLogo({ tail, dot }: { tail: string; dot: string }) {
  return (
    <svg viewBox="0 0 24 24" className="w-[22px] h-[22px]">
      <circle cx="11" cy="11" r="8.500" fill="#fff" stroke={tail} strokeWidth="4" />
      <path d="M11 11l10 11" stroke={tail} strokeWidth="4" />
      <circle cx="11" cy="11" r="2.400" fill={dot} />
    </svg>
  );
}

function TreeRow({ label, icon, hl }: { label: string; icon: ReactNode; hl?: boolean }) {
  return (
    <div className={`h-[25px] shrink-0 flex items-center ${hl ? "bg-[#f0f0f0]" : ""}`}>
      <div className="w-[10px]" />
      <Tri />
      <div className="w-[15px]" />
      <div className="w-[22px] flex justify-center">{icon}</div>
      <span className="ml-[5px] text-[9.5px] tracking-[-0.3px] text-[#222]">{label}</span>
    </div>
  );
}

function Panels() {
  return (
    <div className="w-[171px] shrink-0 bg-[#f0f0f0] flex flex-col pl-px">
      <PanelTitle t="Processing Toolbox" />
      <div className="h-[32px] flex items-center pl-[4px]">
        {["p_gears", "p_py", "clock", "doc"].map((n) => (
          <Mini key={n} n={n} />
        ))}
        <Sep c="w-[10px]" />
        <Mini n="p_edit" />
        <More />
      </div>
      <div className="w-[160px] h-[16px] mt-[3px] bg-white border border-[#c8c8c8] rounded-sm flex items-center pl-[6px] text-[9px] text-[#888]">
        <svg viewBox="0 0 24 24" className="w-[9px] h-[9px] mr-[4px]">
          <circle cx="10" cy="10" r="7" fill="none" stroke="#888" strokeWidth="2.500" />
          <path d="M15 15l7 7" stroke="#888" strokeWidth="2.500" />
        </svg>
        Search...
      </div>
      <div className="w-[160px] h-[105px] border border-[#c8c8c8] bg-white flex flex-col">
        <div className="flex flex-1 min-h-0">
          <div className="flex-1 flex flex-col overflow-hidden">
            <TreeRow label="Recently used" icon={<Svg n="clock" c="w-[22px] h-[22px]" />} />
            <TreeRow label="Cartography" icon={<QLogo tail="#589632" dot="#ee7913" />} />
            <TreeRow label="Database" icon={<QLogo tail="#3f8f5a" dot="#a9673f" />} hl />
            <TreeRow label="" icon={<QLogo tail="#589632" dot="#ee7913" />} />
          </div>
          <div className="w-[21px] shrink-0 border-l border-[#ddd] flex flex-col">
            <div className="h-[21px] flex items-center justify-center border-b border-[#ddd] bg-white">
              <div className="w-0 h-0 border-x-[6px] border-x-transparent border-b-[6px] border-b-[#555]" />
            </div>
            <div className="flex-1 bg-[#f0f0f0] border-b border-[#ccc] mt-[22px]" />
            <div className="h-[20px] flex items-center justify-center">
              <div className="w-0 h-0 border-x-[6px] border-x-transparent border-t-[6px] border-t-[#555]" />
            </div>
          </div>
        </div>
        <div className="h-[20px] shrink-0 flex border-t border-[#ddd] bg-[#f0f0f0]">
          <div className="w-[20px] flex items-center justify-center border-r border-[#ddd]">
            <div className="w-0 h-0 border-y-[6px] border-y-transparent border-r-[6px] border-r-[#555]" />
          </div>
          <div className="w-[95px] bg-[#f6f6f6] border-r-2 border-[#ccc]" />
          <div className="w-[23px] flex items-center justify-center bg-white">
            <div className="w-0 h-0 border-y-[6px] border-y-transparent border-l-[6px] border-l-[#555]" />
          </div>
        </div>
      </div>
      <div className="h-[10px] flex items-center justify-center">
        <div className="w-[12px] h-[3px] border-y border-dotted border-[#bbb]" />
      </div>
      <PanelTitle t="Layers" />
      <div className="h-[36px] flex items-center pl-[4px] pb-[2px]">
        {["brush", "grp", "eye", "funnel"].map((n) => (
          <Mini key={n} n={n} />
        ))}
        <More />
      </div>
      <div className="w-[160px] h-[155px] bg-white border border-[#c8c8c8] pt-px">
        <div className="h-[20px] bg-[#ececec] flex items-center pl-[31px]">
          <div className="w-[20px] h-[20px] bg-white border border-[#ddd] flex items-center justify-center">
            <svg viewBox="0 0 16 16" className="w-[15px] h-[15px]">
              <path d="M2 8l4 6 8-12" fill="none" stroke="#000" strokeWidth="2.200" />
            </svg>
          </div>
          <div className="w-[20px] h-[20px] ml-[5px] bg-[#5f5f66] border border-[#333] flex items-center justify-center">
            <svg viewBox="0 0 16 16" className="w-[16px] h-[16px]">
              <path d="M3 14L13 2" stroke="#b5785f" strokeWidth="2.500" />
              <path d="M12 3l2-2" stroke="#6c9bd0" strokeWidth="2.500" />
            </svg>
          </div>
          <span className="ml-[5px] text-[9.5px] font-bold underline text-[#222]">test</span>
        </div>
      </div>
      <div className="h-[12px] flex items-center justify-center">
        <div className="w-[12px] h-[3px] border-y border-dotted border-[#bbb]" />
      </div>
      <PanelTitle t="Vertex Editor" />
      <div className="w-[160px] pt-[71px] text-center text-[9px] leading-[9.7px] tracking-[-0.42px] text-[#222] whitespace-nowrap">
        <p>
          Right click on an editable feature to show its
          <br />
          table of vertices.
        </p>
        <p className="mt-[9.7px]">
          When a feature is bound to this panel,
          <br />
          dragging a rectangle to select vertices on the
          <br />
          canvas will only select those of the bound
          <br />
          feature.
        </p>
      </div>
    </div>
  );
}

function LeftTools() {
  const items: [string, boolean][] = [
    ["l_v", false],
    ["l_raster", false],
    ["l_mesh", false],
    ["l_comma", false],
    ["l_feather", false],
    ["l_vbox", false],
    ["l_pg", true],
    ["l_wms", true],
    ["l_globe", false],
    ["l_wfs", true],
    ["vstar", true],
  ];
  return (
    <div className="w-[59px] shrink-0 bg-gradient-to-r from-[#fbfbfb] to-[#eeeeee] border-r border-[#a9a9a9] flex flex-col pl-[8px] pt-[8px]">
      <div className="w-[14px] h-[4px] ml-[15px] border-y border-dotted border-[#c4c4c4]" />
      <div className="flex flex-col mt-[6px]">
        {items.map(([n, d], i) => (
          <div key={n + i} className="h-[30px] flex items-center">
            <Svg n={n} c="w-[24px] h-[26px]" />
            {d && <Drop c="w-[19px]" />}
          </div>
        ))}
        <div className="h-[32px] flex items-center pl-[11px]">
          <Svg n="wmsstar" c="w-[22px] h-[23px]" />
        </div>
      </div>
    </div>
  );
}

function Canvas() {
  return (
    <div className="flex-1 min-w-0 bg-white">
      <svg viewBox="0 0 1170 628" className="w-full h-full block">
        <path d="M0 221L429 336 826 589 834 628H0z" fill="#ffff00" />
        <path d="M0 221L429 333 826 589 834 628" fill="none" stroke="#222" strokeWidth=".8" />
        <path d="M145 55L705 88 692 190 436 295z" fill="#a4705a" stroke="#000" strokeWidth="1.300" />
        <path d="M0 217L436 295 826 589" fill="none" stroke="#f33" strokeWidth="1" strokeDasharray="1.500 2" />
        <path d="M424 331l10 10M434 331l-10 10M821 584l10 10M831 584l-10 10" stroke="#f22" strokeWidth="1" />
      </svg>
    </div>
  );
}

const Label = ({ t, c }: { t: string; c: string }) => <span className={`${c} shrink-0 mt-[9px] text-[9.5px] tracking-[-0.4px] leading-[12px] whitespace-nowrap text-[#222]`}>{t}</span>;

function Spin({ v, c }: { v: string; c: string }) {
  return (
    <div className={`${c} h-[24px] mt-[4px] shrink-0 flex bg-white border border-[#bbb] rounded-sm text-[9.5px] leading-[20px] text-[#222] pt-[4px]`}>
      <span className="flex-1 pl-[3px]">{v}</span>
      <div className="w-[18px] -mt-[4px] border-l border-[#bbb] bg-[#f4f4f4] flex justify-center pt-[4px]">
        <div className="w-0 h-0 border-x-[5px] border-x-transparent border-b-[5px] border-b-[#444]" />
      </div>
    </div>
  );
}

function StatusBar() {
  return (
    <div className="h-[19px] shrink-0 flex items-start overflow-hidden bg-[#f0f0f0]">
      <div className="w-[284px] ml-[3px] h-[20px] mt-[9px] shrink-0 bg-white border border-[#bbb] rounded-sm flex items-center pl-[5px] text-[9.5px] text-[#777]">
        <svg viewBox="0 0 24 24" className="w-[9px] h-[9px] mr-[5px]">
          <circle cx="10" cy="10" r="7" fill="none" stroke="#777" strokeWidth="2.500" />
          <path d="M15 15l7 7" stroke="#777" strokeWidth="2.500" />
        </svg>
        Type to locate (Ctrl+K)
      </div>
      <Label t="Validation finished (0 error(s) found)" c="ml-[5px]" />
      <div className="flex-1" />
      <Label t="Coordinate" c="w-[42px]" />
      <div className="w-[91px] h-[20px] mt-[7px] shrink-0 bg-white border border-[#bbb] rounded-sm pl-[4px] text-[9.5px] tracking-[-0.35px] leading-[22px] whitespace-nowrap text-[#222]">103.636537,1.349215</div>
      <div className="w-[28px] shrink-0 flex justify-center">
        <Svg n="toggle" c="w-[22px] h-[22px] mt-[3px]" />
      </div>
      <Label t="Scale" c="w-[22px] ml-[8px]" />
      <div className="w-[121px] h-[24px] mt-[5px] shrink-0 flex justify-between bg-white border border-[#bbb] rounded-sm px-[3px] text-[9.5px] leading-[24px] text-[#222]">
        1:2874
        <div className="w-0 h-0 mr-[5px] mt-[8px] border-x-[5px] border-x-transparent border-t-[6px] border-t-[#444]" />
      </div>
      <div className="w-[35px] shrink-0 flex justify-center">
        <Svg n="lock" c="w-[17px] h-[20px] mt-[4px]" />
      </div>
      <Label t="Magnifier" c="w-[36px]" />
      <Spin v="100%" c="w-[86px]" />
      <Label t="Rotation" c="w-[36px] ml-[9px]" />
      <Spin v="0.0 °" c="w-[86px]" />
      <div className="w-[22px] h-[22px] mt-[4px] ml-[5px] shrink-0 bg-white border border-[#bbb] flex items-center justify-center">
        <svg viewBox="0 0 16 16" className="w-[16px] h-[16px]">
          <path d="M2 8l4 6 8-12" fill="none" stroke="#000" strokeWidth="2.200" />
        </svg>
      </div>
      <Label t="Render" c="w-[30px] ml-[5px]" />
      <div className="w-[33px] shrink-0 flex justify-end pr-[5px]">
        <Svg n="crs" c="w-[17px] h-[17px] mt-[5px]" />
      </div>
      <Label t="EPSG:4326" c="w-[59px]" />
      <div className="w-[18px] h-[18px] mt-[10px] -mr-[8px] shrink-0 rounded-full bg-[#8a8a8a]" />
    </div>
  );
}

export default function App() {
  return (
    <div className="w-[1400px] h-[841px] overflow-hidden flex flex-col bg-[#f0f0f0] font-['Roboto',sans-serif]">
      <TitleBar />
      <MenuBar />
      <Toolbars />
      <div className="flex-1 min-h-0 flex">
        <LeftTools />
        <Panels />
        <Canvas />
      </div>
      <StatusBar />
    </div>
  );
}
